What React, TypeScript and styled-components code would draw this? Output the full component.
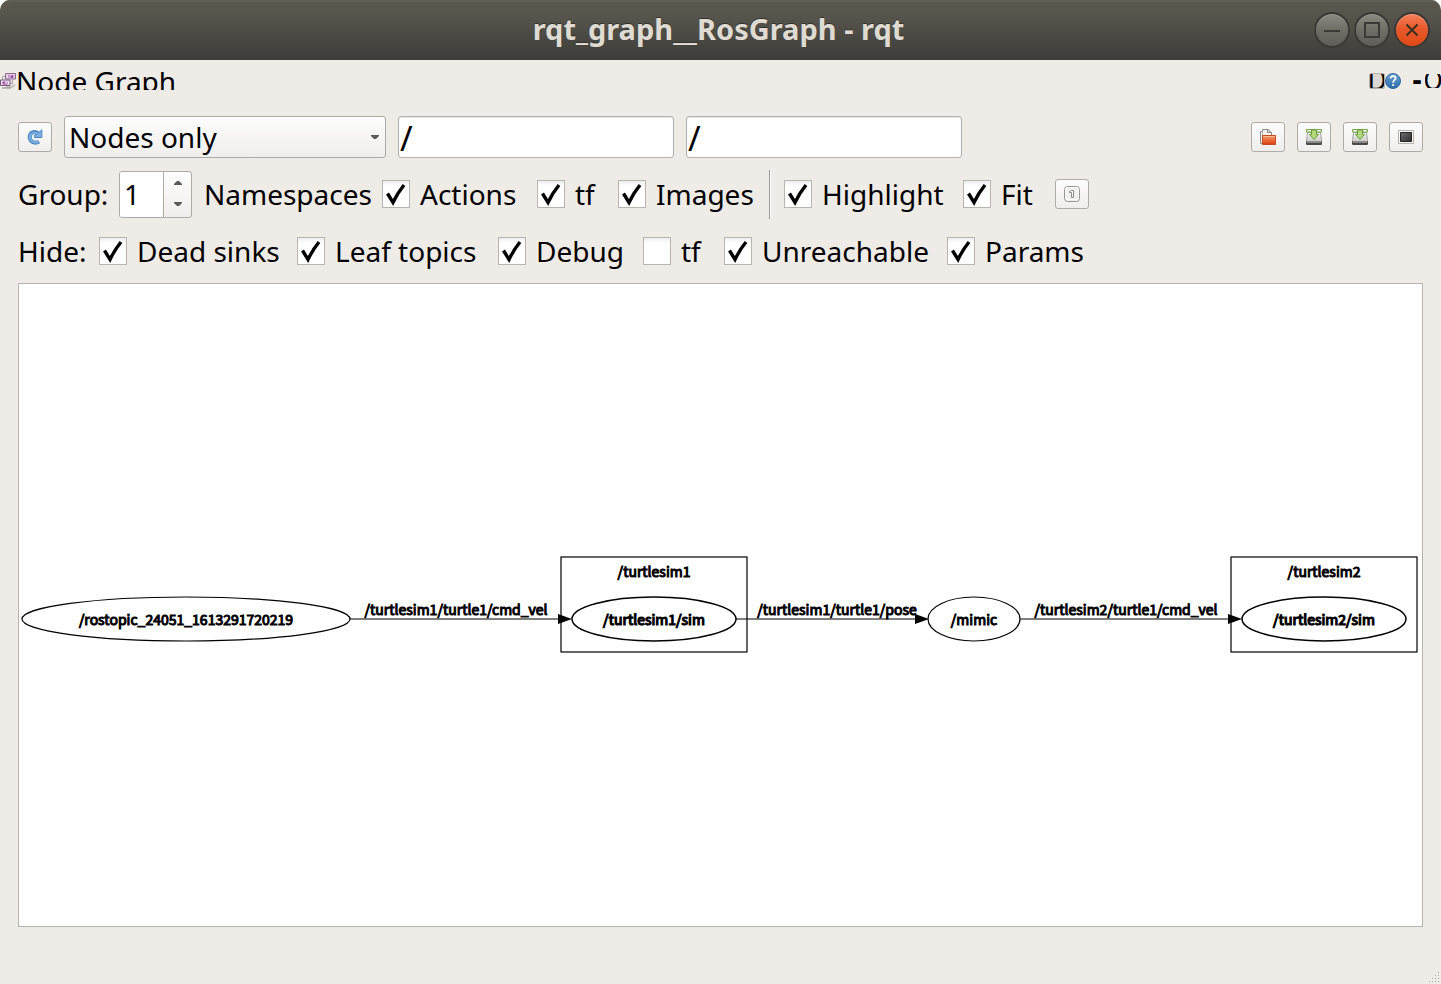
import React, { useState } from 'react';
import styled, { createGlobalStyle, css } from 'styled-components';

const GlobalStyle = createGlobalStyle`
  *, *::before, *::after { box-sizing: border-box; }
  body {
    margin: 0;
    background: #ffffff;
    color: #000000;
    font-family: 'Noto Sans', 'Open Sans', sans-serif;
    font-size: 28px;
    line-height: 36px;
  }
  button, input, select { font: inherit; color: inherit; }
`;

const Window = styled.div`
  display: flex;
  flex-direction: column;
  min-height: 100vh;
  border-radius: 10px 10px 0 0;
  overflow: hidden;
  background: #efebe7;
`;

const TitleBar = styled.header`
  position: relative;
  display: flex;
  align-items: center;
  justify-content: center;
  height: 60px;
  background: linear-gradient(#5b594e, #55534b 30%, #3d3c38);
  box-shadow: inset 0 2px 0 #615f52;
`;

const Title = styled.h1`
  margin: 0;
  padding: 0 4px 2px 0;
  color: #dfdbd2;
  font-size: 29px;
  line-height: 36px;
  font-weight: 700;
  text-shadow: 0 -1px 0 #33322e;
`;

const WindowControls = styled.div`
  position: absolute;
  top: 12px;
  right: 11px;
  display: flex;
  gap: 4px;
`;

const WindowButton = styled.button<{ $close?: boolean }>`
  width: 36px;
  height: 36px;
  padding: 0;
  border: 2px solid #3a3935;
  border-radius: 50%;
  background: ${(p) =>
    p.$close ? 'linear-gradient(#f4805c, #e9592c 45%, #df4a16)' : 'linear-gradient(#8a8881, #6f6d66 50%, #5f5d57)'};
  box-shadow: inset 0 1px 0 ${(p) => (p.$close ? '#f79c7e' : '#98968f')};

  svg { display: block; }
`;

const DockTitle = styled.div`
  display: flex;
  align-items: center;
  justify-content: space-between;
  height: 18px;
  margin: 12px 0 26px;
`;

const DockName = styled.div`
  display: flex;
  align-items: center;
  height: 18px;
  overflow: hidden;

  svg { flex: none; }
`;

const DockHeading = styled.h2`
  margin: 0;
  font-size: 28px;
  line-height: 18px;
  font-weight: 400;
`;

const DockActions = styled.div`
  display: flex;
  align-items: center;
`;

const DockButton = styled.button<{ $framed?: boolean; $small?: boolean }>`
  display: flex;
  align-items: center;
  justify-content: center;
  width: 16px;
  height: ${(p) => (p.$small ? 14 : 16)}px;
  padding: 0;
  border: ${(p) => (p.$framed ? '1px solid #b5b1ad' : '0')};
  border-radius: 2px;
  overflow: hidden;
  background: ${(p) => (p.$framed ? '#dcd8d4' : 'transparent')};
  font-family: 'DejaVu Sans Condensed', 'DejaVu Sans', sans-serif;
  font-size: 27px;
  line-height: 14px;

  svg { flex: none; }
`;

const HyphenButton = styled(DockButton)`
  margin-left: 8px;
  font-weight: 700;
`;

const Content = styled.main`
  display: flex;
  flex: 1;
  flex-direction: column;
  padding: 0 18px;
`;

const Toolbar = styled.div`
  display: flex;
  align-items: center;
  gap: 12px;
`;

const OptionsRow = styled.div<{ $top: number; $height: number }>`
  display: flex;
  align-items: center;
  margin-top: ${(p) => p.$top}px;
  height: ${(p) => p.$height}px;
`;

const raised = css`
  border: 1px solid #aeaaa6;
  border-radius: 3px;
  background: linear-gradient(#fdfdfd, #f0eeec);
`;

const ToolButton = styled.button`
  ${raised}
  display: flex;
  flex: none;
  align-items: center;
  justify-content: center;
  width: 34px;
  height: 30px;
  padding: 0;
`;

const ToolGroup = styled.div`
  display: flex;
  gap: 12px;
  margin-left: auto;
`;

const ModeBox = styled.div`
  position: relative;
  flex: 0 1 322px;
  min-width: 0;

  svg {
    position: absolute;
    top: 19px;
    right: 7px;
    pointer-events: none;
  }
`;

const ModeSelect = styled.select`
  ${raised}
  appearance: none;
  display: block;
  width: 100%;
  height: 42px;
  padding: 0 24px 0 4px;
  line-height: 38px;
`;

const FilterInput = styled.input`
  flex: 0 1 276px;
  min-width: 0;
  height: 42px;
  padding: 2px 1px 0;
  border: 1px solid #b3afab;
  border-radius: 3px;
  background: #ffffff;
  box-shadow: inset 0 1px 1px #e8e6e4;
  font-size: 34px;
`;

const RowLabel = styled.label<{ $width: number }>`
  flex: none;
  width: ${(p) => p.$width}px;
  white-space: nowrap;
`;

const Spinner = styled.div`
  ${raised}
  display: flex;
  flex: none;
  width: 73px;
  height: 47px;
  margin-right: 12px;
  overflow: hidden;
`;

const SpinnerInput = styled.input`
  appearance: textfield;
  flex: 1;
  min-width: 0;
  padding: 0 4px;
  border: 0;
  border-right: 1px solid #aeaaa6;
  background: #ffffff;

  &::-webkit-inner-spin-button { appearance: none; margin: 0; }
`;

const SpinnerButtons = styled.div`
  display: flex;
  flex-direction: column;
  width: 27px;
`;

const StepButton = styled.button<{ $down?: boolean }>`
  display: flex;
  flex: 1;
  align-items: center;
  justify-content: center;
  padding: ${(p) => (p.$down ? '0 0 2px' : '2px 0 0')};
  border: 0;
  background: transparent;
`;

const CheckLabel = styled.label<{ $width: number }>`
  display: flex;
  flex: none;
  align-items: center;
  gap: 10px;
  width: ${(p) => p.$width}px;
  white-space: nowrap;
`;

const CheckBox = styled.span`
  position: relative;
  flex: none;
  width: 28px;
  height: 28px;

  input {
    appearance: none;
    display: block;
    width: 28px;
    height: 28px;
    margin: 0;
    border: 1px solid #b8b4b0;
    background: linear-gradient(#eeeeee, #ffffff 5px);
  }

  svg {
    position: absolute;
    top: 0;
    left: 0;
    display: none;
    pointer-events: none;
  }

  input:checked + svg { display: block; }
`;

const Divider = styled.div`
  flex: none;
  width: 2px;
  height: 49px;
  margin-right: 13px;
  border-left: 1px solid #9b9894;
  border-right: 1px solid #ffffff;
`;

const Canvas = styled.section`
  display: flex;
  flex: 1;
  align-items: center;
  margin-top: 14px;
  border: 1px solid #b5b3b0;
  background: #ffffff;
`;

const Graph = styled.svg`
  display: block;
  width: 100%;
  font-family: 'Noto Sans CJK JP', sans-serif;
  font-size: 14px;
`;

const StatusBar = styled.footer`
  display: flex;
  align-items: flex-end;
  justify-content: flex-end;
  height: 57px;
  padding: 0 1px 1px 0;
`;

const DownArrow = () => (
  <svg width="8" height="5" viewBox="0 0 8 5" aria-hidden="true">
    <path d="M0 0h8v1L5 4H3L0 1z" fill="#5c5a58" />
  </svg>
);

const UpArrow = () => (
  <svg width="8" height="5" viewBox="0 0 8 5" aria-hidden="true">
    <path d="M0 4h8V3L5 0H3L0 3z" fill="#5c5a58" />
  </svg>
);

const NodeGraphIcon = () => (
  <svg width="16" height="16" viewBox="0 0 16 16" aria-hidden="true">
    <path d="M6 13.500c3 1.500 8 .5 8.500-2" fill="none" stroke="#c4c0bc" strokeWidth="2" />
    <path d="M2.500 8V3.500H6M12.500 7v3.500H10" fill="none" stroke="#a9a5a6" />
    <path d="M5.500.5h10v5.500h-10z" fill="#e9d3ea" stroke="#85688a" />
    <path d="M8.500 2h5v3h-5z" fill="#a55aa9" />
    <path d="M10 2h1.500L10 5H8.500z" fill="#dcb4de" />
    <path d="M.5 7h9.500v5.500H.5z" fill="#f3e4f4" stroke="#77597c" />
    <path d="M2.500 8.500h5v3h-5z" fill="#a04fa6" />
    <path d="M5.500 8.500h2l-1 2h-2z" fill="#f3e4f4" />
    <path d="M2 15h9" stroke="#8f8b8b" />
  </svg>
);

const HelpIcon = () => (
  <svg width="16" height="16" viewBox="0 0 16 16" aria-hidden="true">
    <defs>
      <linearGradient id="help" x2="0" y2="1">
        <stop stopColor="#69a2d4" />
        <stop offset="1" stopColor="#2d6ba9" />
      </linearGradient>
    </defs>
    <circle cx="8" cy="8" r="7.5" fill="url(#help)" stroke="#31699f" />
    <path d="M5.600 5.400C5.800 3.800 7 3.200 8.100 3.200c1.400 0 2.500.8 2.500 2.100C10.600 7.200 8.100 7.300 8.100 9.700" fill="none" stroke="#fff" strokeWidth="1.700" />
    <circle cx="8.100" cy="12" r="1.100" fill="#fff" />
  </svg>
);

const RefreshIcon = () => (
  <svg width="16" height="16" viewBox="0 0 16 16" aria-hidden="true">
    <path d="M12 12.600C8.500 15 2.600 13 2.700 8c.1-4.500 5-6.400 8.600-3.600" fill="none" stroke="#4d88c4" strokeWidth="4" />
    <path d="M14.800.8v7.700H7.500V6L10 5.300z" fill="#7db0e2" stroke="#4d88c4" />
    <path d="M11.400 12.600C8.500 14.300 2.700 12.700 2.900 8 3.100 4 8.300 2.500 11.300 5.200" fill="none" stroke="#78acdf" strokeWidth="2.400" />
  </svg>
);

const FolderIcon = () => (
  <svg width="16" height="16" viewBox="0 0 16 16" aria-hidden="true">
    <defs>
      <linearGradient id="folder" x2="0" y2="1">
        <stop stopColor="#f9a06c" />
        <stop offset="1" stopColor="#dc3d10" />
      </linearGradient>
    </defs>
    <path d="M.5 14.500V2.500h2v-2h6l3 3v4h-6v7z" fill="#f4f4f3" stroke="#8b8b89" />
    <path d="M7.500.5v3h4" fill="#d6d6d4" stroke="#8b8b89" />
    <path d="M2.500 2.500v10" stroke="#b8b8b5" />
    <path d="M2.500 6.500h13v9h-13z" fill="url(#folder)" stroke="#c54a1c" />
    <path d="M3 7.500h12" stroke="#fbb78c" />
  </svg>
);

const SaveIcon = () => (
  <svg width="16" height="16" viewBox="0 0 16 16" aria-hidden="true">
    <defs>
      <linearGradient id="drive" x2="0" y2="1">
        <stop stopColor="#f4f4f3" />
        <stop offset="1" stopColor="#bdbdbb" />
      </linearGradient>
    </defs>
    <path d="M1.500 3.500h13l1 8v4H.5v-4z" fill="url(#drive)" stroke="#a2a29f" />
    <path d="M0 12.500h16v2.500l-1 1H1l-1-1z" fill="#4a4a48" />
    <path d="M1 13.500h14" stroke="#8b8b88" />
    <path d="M.5.5h15v2.500H.5z" fill="#f7fbf2" stroke="#72a644" />
    <path d="M5.500 1v4.500H3.500L8 10.500l4.500-5h-2V1z" fill="#b4d67c" stroke="#6a9d38" />
  </svg>
);

const ScreenIcon = () => (
  <svg width="16" height="14" viewBox="0 0 16 14" aria-hidden="true">
    <defs>
      <linearGradient id="screen" x2="1" y2="1">
        <stop stopColor="#6e6e6e" />
        <stop offset="1" stopColor="#2e2e2e" />
      </linearGradient>
    </defs>
    <path d="M.5.5h15v13H.5z" fill="#fafafa" stroke="#b3b1ae" />
    <path d="M2.500 2.500h11v9h-11z" fill="url(#screen)" stroke="#222" />
  </svg>
);

const ZoomOneIcon = () => (
  <svg width="16" height="16" viewBox="0 0 16 16" aria-hidden="true">
    <rect x=".5" y=".5" width="15" height="15" rx="3" fill="#efefee" stroke="#969492" />
    <rect x="1.500" y="1.500" width="13" height="12" rx="2" fill="none" stroke="#ffffff" />
    <path d="M5.500 6.500v-1l2-1h2v7h-2v-5z" fill="#fafafa" stroke="#8f8d8b" />
  </svg>
);

const CheckMark = () => (
  <svg width="28" height="28" viewBox="0 0 28 28" aria-hidden="true">
    <path d="M5.500 13.500L11 22.500Q15.500 13 22 5" fill="none" stroke="#000" strokeWidth="3.400" />
  </svg>
);

interface OptionProps {
  label: string;
  width: number;
  checked?: boolean;
}

function Option({ label, width, checked = true }: OptionProps) {
  return (
    <CheckLabel $width={width}>
      <CheckBox>
        <input type="checkbox" defaultChecked={checked} />
        <CheckMark />
      </CheckBox>
      {label}
    </CheckLabel>
  );
}

interface GraphNodeProps {
  name: string;
  cx: number;
  rx: number;
  bold?: boolean;
}

const GraphNode = ({ name, cx, rx, bold }: GraphNodeProps) => (
  <g>
    <ellipse cx={cx} cy="62" rx={rx} ry="22" fill="none" stroke="#000" strokeWidth={bold ? 1.5 : 1.2} />
    <text x={cx} y="68" textAnchor="middle" stroke="#000" strokeWidth={bold ? 1.2 : 1}>{name}</text>
  </g>
);

const Namespace = ({ name, x }: { name: string; x: number }) => (
  <g>
    <rect x={x} y="0" width="186" height="95" fill="none" stroke="#000" strokeWidth="1.200" />
    <text x={x + 93} y="20" textAnchor="middle" stroke="#000" strokeWidth="1">{name}</text>
  </g>
);

interface EdgeProps {
  topic: string;
  from: number;
  to: number;
  labelX: number;
}

const Edge = ({ topic, from, to, labelX }: EdgeProps) => (
  <g>
    <path d={`M${from} 62H${to - 12}`} stroke="#000" strokeWidth="1.200" />
    <path d={`M${to - 14} 57L${to} 62l-14 5z`} />
    <text x={labelX} y="58" textAnchor="middle" stroke="#000" strokeWidth="1">{topic}</text>
  </g>
);

export default function App() {
  const [depth, setDepth] = useState(1);

  return (
    <>
      <GlobalStyle />
      <Window>
        <TitleBar>
          <Title>rqt_graph__RosGraph - rqt</Title>
          <WindowControls>
            <WindowButton aria-label="Minimize">
              <svg width="32" height="32" viewBox="0 0 32 32"><path d="M8 17h16" stroke="#3a3935" strokeWidth="2" /></svg>
            </WindowButton>
            <WindowButton aria-label="Maximize">
              <svg width="32" height="32" viewBox="0 0 32 32"><path d="M9 9h14v14H9z" fill="none" stroke="#3a3935" strokeWidth="2" /></svg>
            </WindowButton>
            <WindowButton $close aria-label="Close">
              <svg width="32" height="32" viewBox="0 0 32 32"><path d="M10.500 10.500l11 11M21.500 10.500l-11 11" stroke="#3a3020" strokeWidth="2" /></svg>
            </WindowButton>
          </WindowControls>
        </TitleBar>

        <DockTitle>
          <DockName>
            <NodeGraphIcon />
            <DockHeading>Node Graph</DockHeading>
          </DockName>
          <DockActions>
            <DockButton $framed>D</DockButton>
            <DockButton aria-label="Help"><HelpIcon /></DockButton>
            <HyphenButton>-</HyphenButton>
            <DockButton $small>O</DockButton>
          </DockActions>
        </DockTitle>

        <Content>
          <Toolbar>
            <ToolButton aria-label="Refresh"><RefreshIcon /></ToolButton>
            <ModeBox>
              <ModeSelect aria-label="Graph type" defaultValue="nodes">
                <option value="nodes">Nodes only</option>
              </ModeSelect>
              <DownArrow />
            </ModeBox>
            <FilterInput aria-label="Namespace filter" defaultValue="/" />
            <FilterInput aria-label="Topic filter" defaultValue="/" />
            <ToolGroup>
              <ToolButton aria-label="Load from file"><FolderIcon /></ToolButton>
              <ToolButton aria-label="Save as DOT"><SaveIcon /></ToolButton>
              <ToolButton aria-label="Save as SVG"><SaveIcon /></ToolButton>
              <ToolButton aria-label="Save as image"><ScreenIcon /></ToolButton>
            </ToolGroup>
          </Toolbar>

          <OptionsRow $top={12} $height={48}>
            <RowLabel $width={101} htmlFor="depth">Group:</RowLabel>
            <Spinner>
              <SpinnerInput
                id="depth"
                type="number"
                value={depth}
                onChange={(e) => setDepth(Number(e.target.value))}
              />
              <SpinnerButtons>
                <StepButton aria-label="Increase" onClick={() => setDepth(depth + 1)}><UpArrow /></StepButton>
                <StepButton $down aria-label="Decrease" onClick={() => setDepth(depth - 1)}><DownArrow /></StepButton>
              </SpinnerButtons>
            </Spinner>
            <RowLabel $width={178} htmlFor="depth">Namespaces</RowLabel>
            <Option label="Actions" width={155} />
            <Option label="tf" width={81} />
            <Option label="Images" width={151} />
            <Divider />
            <Option label="Highlight" width={179} />
            <Option label="Fit" width={92} />
            <ToolButton aria-label="Fit in view"><ZoomOneIcon /></ToolButton>
          </OptionsRow>

          <OptionsRow $top={15} $height={36}>
            <RowLabel as="span" $width={81}>Hide:</RowLabel>
            <Option label="Dead sinks" width={198} />
            <Option label="Leaf topics" width={201} />
            <Option label="Debug" width={145} />
            <Option label="tf" width={81} checked={false} />
            <Option label="Unreachable" width={223} />
            <Option label="Params" width={136} />
          </OptionsRow>

          <Canvas>
            <Graph viewBox="0 0 1403 96" overflow="visible" role="img" aria-label="ROS node graph">
              <Namespace name="/turtlesim1" x={542} />
              <Namespace name="/turtlesim2" x={1212} />
              <Edge topic="/turtlesim1/turtle1/cmd_vel" from={331} to={553} labelX={437} />
              <Edge topic="/turtlesim1/turtle1/pose" from={717} to={910} labelX={818} />
              <Edge topic="/turtlesim2/turtle1/cmd_vel" from={1001} to={1223} labelX={1107} />
              <GraphNode name="/rostopic_24051_1613291720219" cx={167} rx={164} />
              <GraphNode name="/turtlesim1/sim" cx={635} rx={82} bold />
              <GraphNode name="/mimic" cx={955} rx={46} />
              <GraphNode name="/turtlesim2/sim" cx={1305} rx={82} bold />
            </Graph>
          </Canvas>
        </Content>

        <StatusBar>
          <svg width="12" height="12" viewBox="0 0 12 12" aria-hidden="true">
            <path
              d="M10 1h1v1h-1zM7 4h1v1H7zM10 4h1v1h-1zM4 7h1v1H4zM7 7h1v1H7zM10 7h1v1h-1zM1 10h1v1H1zM4 10h1v1H4zM7 10h1v1H7zM10 10h1v1h-1z"
              fill="#a8a5a1"
            />
          </svg>
        </StatusBar>
      </Window>
    </>
  );
}
